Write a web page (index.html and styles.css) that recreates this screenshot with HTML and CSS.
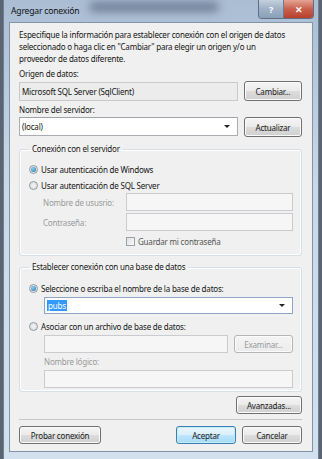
FILE: index.html
```html
<!DOCTYPE html>
<html lang="es">
<head>
    <meta charset="UTF-8">
    <title>Agregar conexión</title>
    <link rel="stylesheet" href="styles.css">
</head>
<body>
    <div class="window">
        <div class="titlebar">
            <span class="title">Agregar conexión</span>
            <div class="glare"></div>
            <div class="caption-buttons">
                <div class="cap-btn help">?</div>
                <div class="cap-btn close">✕</div>
            </div>
        </div>

        <div class="client">
            <p class="intro">Especifique la información para establecer conexión con el origen de datos<br>seleccionado o haga clic en "Cambiar" para elegir un origen y/o un<br>proveedor de datos diferente.</p>

            <label class="field-label">Origen de datos:</label>
            <div class="row">
                <div class="textbox readonly grow">Microsoft SQL Server (SqlClient)</div>
                <button class="btn side">Cambiar...</button>
            </div>

            <label class="field-label">Nombre del servidor:</label>
            <div class="row">
                <div class="textbox combo grow">(local)<span class="arrow"></span></div>
                <button class="btn side">Actualizar</button>
            </div>

            <fieldset class="group server">
                <legend>Conexión con el servidor</legend>
                <div class="radio-row"><span class="radio checked"></span>Usar autenticación de Windows</div>
                <div class="radio-row"><span class="radio"></span>Usar autenticación de SQL Server</div>
                <div class="cred">
                    <span class="dim">Nombre de ususrio:</span>
                    <div class="textbox disabled"></div>
                    <span class="dim">Contraseña:</span>
                    <div class="textbox disabled"></div>
                    <span></span>
                    <div class="check-row"><span class="checkbox"></span>Guardar mi contraseña</div>
                </div>
            </fieldset>

            <fieldset class="group database">
                <legend>Establecer conexión con una base de datos</legend>
                <div class="radio-row"><span class="radio checked"></span>Seleccione o escriba el nombre de la base de datos:</div>
                <div class="indent">
                    <div class="textbox combo"><span class="selected">pubs</span><span class="arrow"></span></div>
                </div>
                <div class="radio-row"><span class="radio"></span>Asociar con un archivo de base de datos:</div>
                <div class="indent">
                    <div class="row file-row">
                        <div class="textbox disabled grow"></div>
                        <button class="btn disabled-btn">Examinar...</button>
                    </div>
                    <span class="dim logical">Nombre lógico:</span>
                    <div class="textbox disabled"></div>
                </div>
            </fieldset>

            <div class="advanced">
                <button class="btn">Avanzadas...</button>
            </div>

            <div class="footer">
                <button class="btn test">Probar conexión</button>
                <div class="footer-right">
                    <button class="btn default">Aceptar</button>
                    <button class="btn">Cancelar</button>
                </div>
            </div>
        </div>
    </div>
</body>
</html>
```

FILE: styles.css
```css
* {
    margin: 0;
    padding: 0;
    box-sizing: border-box;
}

body {
    background: #5a6472;
    font-family: "Noto Sans", "Open Sans", sans-serif;
    font-size: 8px;
    letter-spacing: -0.2px;
    color: #141414;
    height: 459px;
    overflow: hidden;
}

.window {
    margin: 0 3px;
    height: 459px;
    padding: 0 5px 7px;
    background: linear-gradient(to bottom, #aabdd3 0%, #c9d8e8 40%, #d3e0ee 100%);
    border-left: 1px solid #6f7f93;
    border-right: 1px solid #6f7f93;
    display: flex;
    flex-direction: column;
}

.titlebar {
    height: 22px;
    display: flex;
    align-items: flex-start;
    position: relative;
}

.title {
    padding: 5px 0 0 2px;
    font-size: 8.6px;
    color: #111;
}

.glare {
    position: absolute;
    left: 80px;
    top: 2px;
    width: 130px;
    height: 10px;
    background: rgba(40, 55, 80, 0.45);
    filter: blur(4px);
    border-radius: 6px;
}

.caption-buttons {
    margin-left: auto;
    display: flex;
    margin-right: -1px;
    border: 1px solid #5f6f86;
    border-top: none;
    border-radius: 0 0 4px 4px;
    overflow: hidden;
}

.cap-btn {
    height: 18px;
    display: flex;
    align-items: center;
    justify-content: center;
    color: #fff;
    font-size: 9px;
    font-weight: bold;
}

.help {
    width: 25px;
    background: linear-gradient(to bottom, #c3d0de, #9fb1c6 50%, #8aa0b8);
    border-right: 1px solid #6b7d93;
}

.close {
    width: 29px;
    background: linear-gradient(to bottom, #e4a494, #c9604c 50%, #b8402c);
}

.client {
    flex: 1;
    background: #f0f0f0;
    border: 1px solid #8393a8;
    padding: 6px 10px 0 9px;
    display: flex;
    flex-direction: column;
}

.intro {
    line-height: 12px;
    white-space: nowrap;
}

.field-label {
    display: block;
    margin-top: 3px;
    line-height: 12px;
}

.row {
    display: flex;
    gap: 6px;
    align-items: center;
}

.grow {
    flex: 1;
}

.textbox {
    height: 19px;
    border: 1px solid #abadb3;
    border-top-color: #9ea3ad;
    background: #fff;
    line-height: 17px;
    padding-left: 2px;
    position: relative;
}

.readonly {
    background: #ececec;
    border-color: #c7c9cc;
    margin-top: 2px;
}

.combo {
    padding-right: 16px;
}

.arrow {
    position: absolute;
    right: 7px;
    top: 7px;
    border-left: 3px solid transparent;
    border-right: 3px solid transparent;
    border-top: 3px solid #222;
}

.disabled {
    background: #f6f6f6;
    border-color: #c9cbce;
    height: 18px;
}

.btn {
    font-family: inherit;
    font-size: 8px;
    letter-spacing: -0.2px;
    white-space: nowrap;
    color: #1a1a1a;
    height: 20px;
    padding: 0 4px;
    border: 1px solid #707070;
    border-radius: 3px;
    background: linear-gradient(to bottom, #f4f4f4 0%, #ebebeb 48%, #dcdcdc 52%, #d0d0d0 100%);
    box-shadow: inset 0 0 0 1px #fbfbfb;
}

.side {
    width: 58px;
    margin-top: 1px;
}

.group {
    border: 1px solid #d5dfe5;
    border-radius: 3px;
    box-shadow: inset 0 0 0 1px #fff;
    padding: 0 8px 0 9px;
}

.group legend {
    padding: 0 3px;
    line-height: 12px;
}

.server {
    margin-top: 6px;
    height: 113px;
}

.radio-row {
    display: flex;
    align-items: center;
    gap: 3px;
    height: 16px;
}

.server .radio-row:first-of-type {
    margin-top: 6px;
}

.radio {
    width: 9px;
    height: 9px;
    border-radius: 50%;
    border: 1px solid #8e9aa6;
    background: radial-gradient(circle, #f4f4f4, #d8d8d8);
    display: flex;
    align-items: center;
    justify-content: center;
}

.radio.checked::after {
    content: "";
    width: 5px;
    height: 5px;
    border-radius: 50%;
    background: radial-gradient(circle at 40% 35%, #8fd0f5, #1a6ea8);
}

.cred {
    display: grid;
    grid-template-columns: 83px 1fr;
    row-gap: 2px;
    align-items: center;
    margin: 0 0 0 14px;
}

.dim {
    color: #9a9a9a;
}

.check-row {
    display: flex;
    align-items: center;
    gap: 3px;
    height: 16px;
    color: #555;
}

.checkbox {
    width: 9px;
    height: 9px;
    border: 1px solid #9aa2aa;
    background: linear-gradient(135deg, #e0e0e0, #fafafa);
}

.database {
    margin-top: 5px;
    height: 131px;
}

.database .radio-row:first-of-type {
    margin-top: 7px;
}

.indent {
    margin-left: 15px;
}

.database .combo {
    height: 17px;
    line-height: 15px;
    border-color: #8da6c2;
    margin-top: 1px;
}

.database .arrow {
    top: 6px;
}

.selected {
    background: #3399ff;
    color: #fff;
    padding: 0 1px;
}

.database .radio-row + .indent + .radio-row {
    margin-top: 4px;
}

.file-row {
    gap: 6px;
    margin-top: 1px;
}

.disabled-btn {
    color: #9a9a9a;
    height: 18px;
    width: 59px;
    border-color: #b5b5b5;
    background: linear-gradient(to bottom, #f4f4f4, #ececec);
}

.logical {
    display: block;
    line-height: 16px;
    margin-top: 1px;
}

.advanced {
    display: flex;
    justify-content: flex-end;
    margin-top: 4px;
    padding-bottom: 5px;
    border-bottom: 1px solid #c8c8c8;
}

.advanced .btn {
    width: 66px;
    height: 18px;
}

.footer {
    display: flex;
    justify-content: space-between;
    padding-top: 6px;
}

.footer .btn {
    height: 18px;
}

.test {
    width: 82px;
}

.footer-right {
    display: flex;
    gap: 6px;
}

.footer-right .btn {
    width: 60px;
}

.default {
    border-color: #3c7fb1;
    background: linear-gradient(to bottom, #eaf6fd 0%, #d9f0fc 48%, #bee6fd 52%, #a7d9f5 100%);
    box-shadow: inset 0 0 0 1px #c5ecfb;
}
```
